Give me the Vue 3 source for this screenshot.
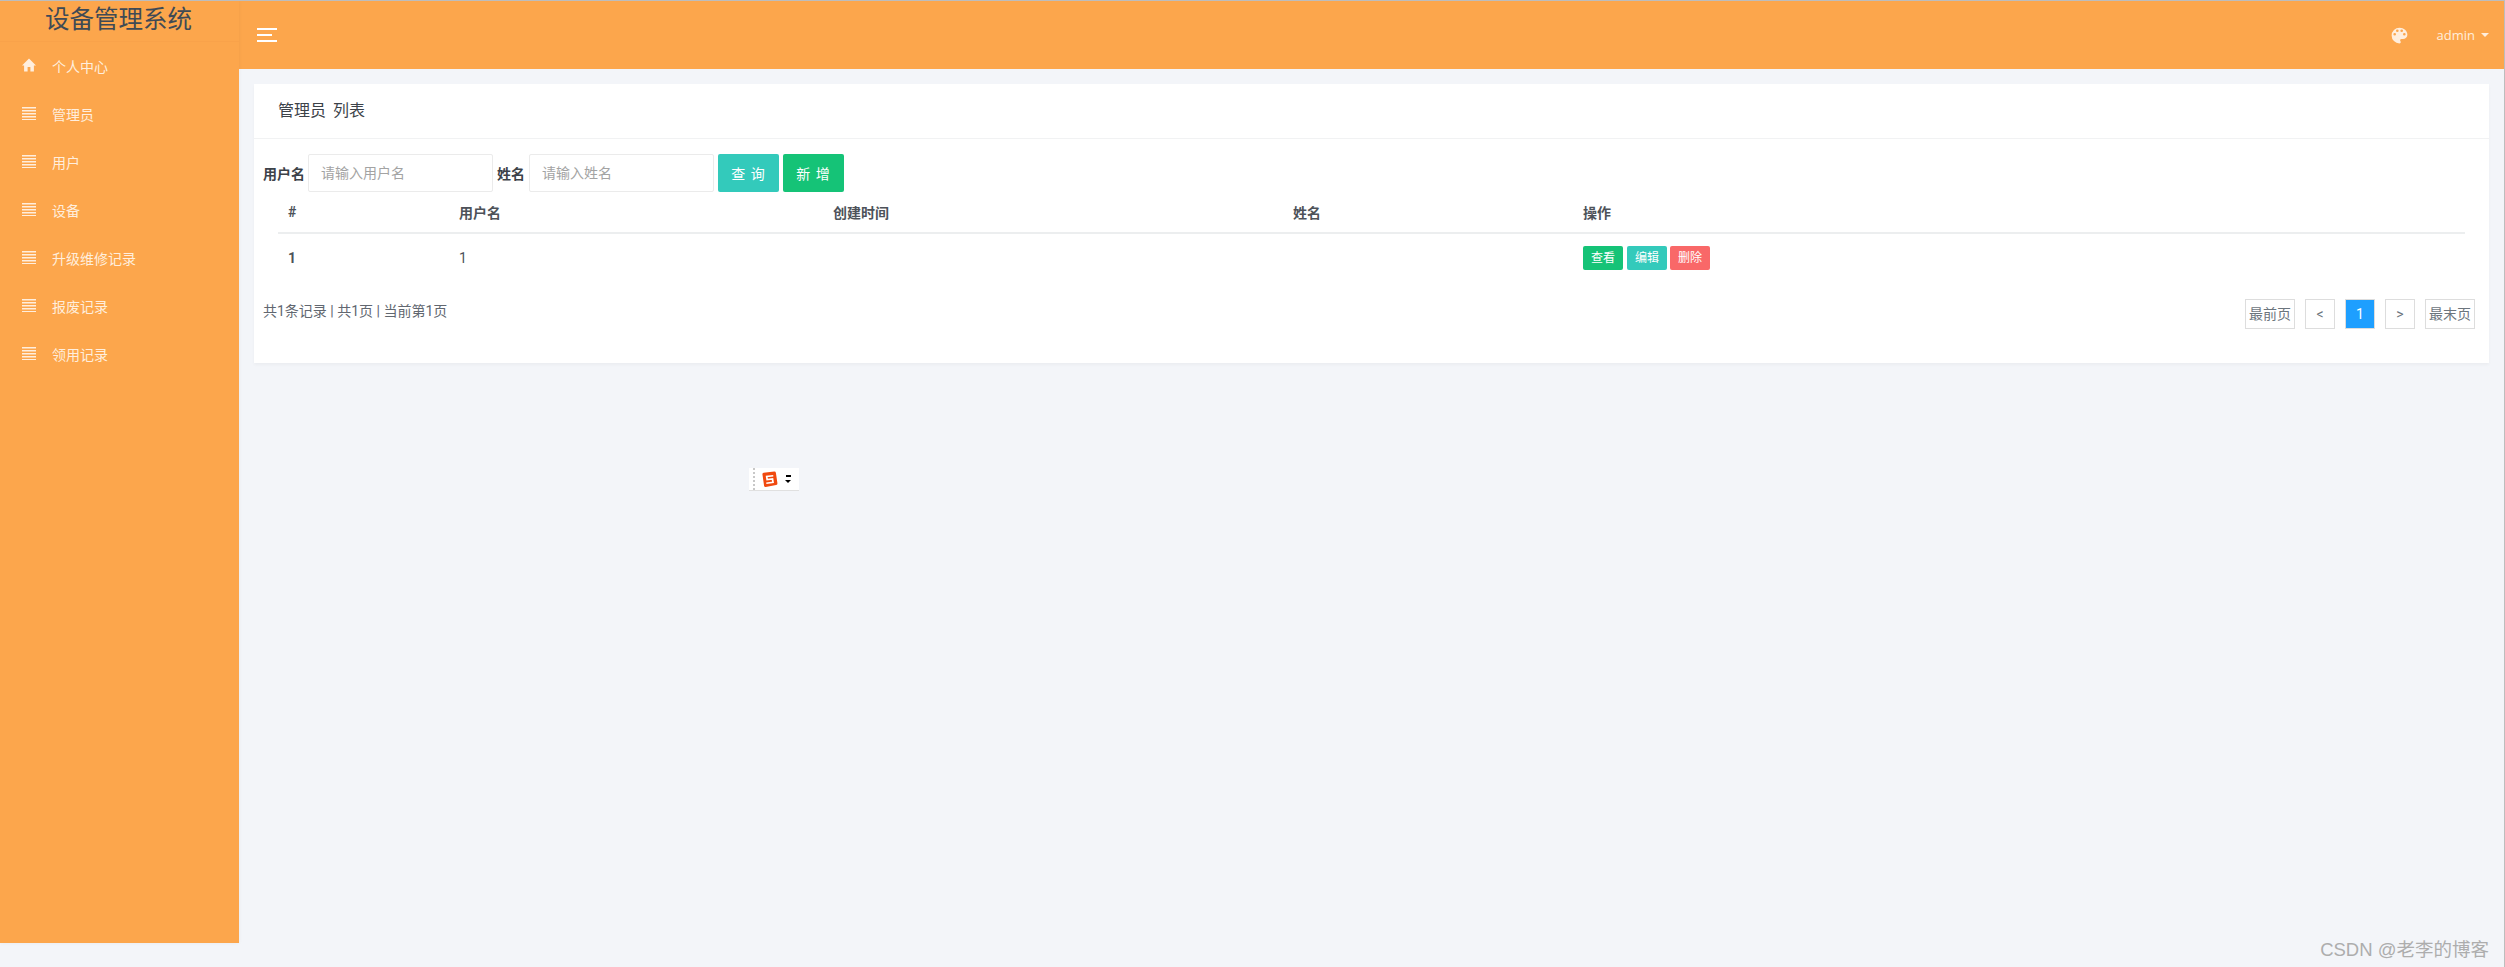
<script setup>
const menus = [
  { name: '个人中心', icon: 'home' },
  { name: '管理员', icon: 'list' },
  { name: '用户', icon: 'list' },
  { name: '设备', icon: 'list' },
  { name: '升级维修记录', icon: 'list' },
  { name: '报废记录', icon: 'list' },
  { name: '领用记录', icon: 'list' },
]

const homePath = 'M10 20v-6h4v6h5v-8h3L12 3 2 12h3v8h5z'
const listPath = 'M0 1h14v1.4H0zM0 4h14v1.4H0zM0 7h14v1.4H0zM0 10h14v1.4H0zM0 13h14v1H0z'
const palettePath = 'M17.5,12A1.5,1.5 0 0,1 16,10.5A1.5,1.5 0 0,1 17.5,9A1.5,1.5 0 0,1 19,10.5A1.5,1.5 0 0,1 17.5,12M14.5,8A1.5,1.5 0 0,1 13,6.5A1.5,1.5 0 0,1 14.5,5A1.5,1.5 0 0,1 16,6.5A1.5,1.5 0 0,1 14.5,8M9.5,8A1.5,1.5 0 0,1 8,6.5A1.5,1.5 0 0,1 9.5,5A1.5,1.5 0 0,1 11,6.5A1.5,1.5 0 0,1 9.5,8M6.5,12A1.5,1.5 0 0,1 5,10.5A1.5,1.5 0 0,1 6.5,9A1.5,1.5 0 0,1 8,10.5A1.5,1.5 0 0,1 6.5,12M12,3A9,9 0 0,0 3,12A9,9 0 0,0 12,21A1.5,1.5 0 0,0 13.5,19.5C13.5,19.11 13.35,18.76 13.11,18.5C12.88,18.23 12.73,17.88 12.73,17.5A1.5,1.5 0 0,1 14.23,16H16A5,5 0 0,0 21,11C21,6.58 16.97,3 12,3Z'

const pages = [
  { label: '最前页', wide: true },
  { label: '<' },
  { label: '1', active: true },
  { label: '>' },
  { label: '最末页', wide: true },
]
</script>

<template>
  <div class="layout">
    <aside class="sidebar">
      <div class="brand">设备管理系统</div>
      <ul class="menu">
        <li v-for="m in menus" :key="m.name" class="menu-item">
          <svg v-if="m.icon === 'home'" class="menu-icon" viewBox="2 2.5 20 18" preserveAspectRatio="none">
            <path :d="homePath" fill="currentColor" />
          </svg>
          <svg v-else class="menu-icon" viewBox="0 0 14 14">
            <path :d="listPath" fill="currentColor" />
          </svg>
          <span>{{ m.name }}</span>
        </li>
      </ul>
    </aside>

    <div class="main">
      <header class="topbar">
        <div class="burger"><i></i><i class="short"></i><i></i></div>
        <div class="top-right">
          <svg class="palette" viewBox="0 0 24 24"><path :d="palettePath" fill="currentColor" /></svg>
          <span class="user">admin</span>
          <span class="caret"></span>
        </div>
      </header>

      <div class="content">
        <div class="card">
          <div class="card-head">管理员 列表</div>
          <div class="card-body">
            <div class="filters">
              <label>用户名</label>
              <input type="text" placeholder="请输入用户名">
              <label class="second">姓名</label>
              <input type="text" placeholder="请输入姓名">
              <button class="btn teal">查 询</button>
              <button class="btn green">新 增</button>
            </div>

            <table class="list">
              <colgroup>
                <col style="width: 171px">
                <col style="width: 374px">
                <col style="width: 460px">
                <col style="width: 290px">
                <col>
              </colgroup>
              <thead>
                <tr>
                  <th>#</th>
                  <th>用户名</th>
                  <th>创建时间</th>
                  <th>姓名</th>
                  <th>操作</th>
                </tr>
              </thead>
              <tbody>
                <tr>
                  <td class="num">1</td>
                  <td>1</td>
                  <td></td>
                  <td></td>
                  <td>
                    <div class="actions">
                      <a class="mini green">查看</a>
                      <a class="mini teal">编辑</a>
                      <a class="mini red">删除</a>
                    </div>
                  </td>
                </tr>
              </tbody>
            </table>

            <div class="foot">
              <span class="summary">共1条记录 | 共1页 | 当前第1页</span>
              <div class="pager">
                <a
                  v-for="p in pages"
                  :key="p.label"
                  class="page"
                  :class="{ wide: p.wide, active: p.active }"
                >{{ p.label }}</a>
              </div>
            </div>
          </div>
        </div>
      </div>
    </div>

    <div class="ime">
      <span class="ime-grip"></span>
      <svg class="ime-logo" viewBox="0 0 18 18">
        <path d="M1.5 3.5 Q1.3 2 2.8 1.8 L14 0.6 Q15.6 0.5 15.8 2 L17.4 13 Q17.6 14.6 16 14.9 L5 17 Q3.6 17.2 3.3 15.8 Z" fill="#f0490f" />
        <path d="M13 5 L6 5.7 L6.5 9 L12.2 8.5 L12.7 12 L5.6 13" fill="none" stroke="#fff" stroke-width="1.8" />
      </svg>
      <span class="ime-arrows"><i></i><b></b></span>
    </div>

    <div class="watermark">CSDN @老李的博客</div>
  </div>
</template>

<style>
html, body {
  margin: 0;
  padding: 0;
  background: #f3f5f9;
  overflow: hidden;
}
</style>

<style scoped>
.layout {
  position: relative;
  display: flex;
  align-items: flex-start;
  box-sizing: border-box;
  width: 2505px;
  height: 967px;
  overflow: hidden;
  border-top: 1px solid #bdbdbd;
  border-right: 1px solid #bdbdbd;
  background: #f3f5f9;
  color: #4d5259;
  font-family: Roboto, "Noto Sans CJK SC", sans-serif;
  font-size: 14px;
}

.sidebar {
  flex: none;
  width: 239px;
  height: 942px;
  background: #fca64c;
  box-shadow: 0 0 4px rgba(0, 0, 0, 0.05);
  z-index: 1;
}

.brand {
  height: 40px;
  line-height: 38px;
  padding-left: 45px;
  border-bottom: 1px solid #f9a24a;
  color: #3f4a55;
  font-size: 24.5px;
  white-space: nowrap;
}

.menu {
  list-style: none;
  margin: 0;
  padding: 0;
}

.menu-item {
  display: flex;
  align-items: center;
  height: 48px;
  padding-left: 22px;
  color: #ffeedd;
}

.menu-icon {
  flex: none;
  width: 14px;
  height: 14px;
  margin: -2px 16px 0 0;
}

.main {
  flex: 1;
  min-width: 0;
}

.topbar {
  display: flex;
  align-items: center;
  justify-content: space-between;
  height: 68px;
  padding: 0 15px 0 18px;
  background: #fca64c;
  color: #ffeedd;
}

.burger {
  display: flex;
  flex-direction: column;
  gap: 4px;
  width: 20px;
  margin-top: -1px;
}

.burger i {
  display: block;
  height: 2px;
  background: #fff;
}

.burger i.short {
  width: 15px;
}

.top-right {
  display: flex;
  align-items: center;
}

.palette {
  width: 21px;
  height: 21px;
  margin-right: 27px;
}

.user {
  font-size: 13px;
  font-family: "Open Sans", sans-serif;
}

.caret {
  margin-left: 6px;
  border-top: 4px solid #ffeedd;
  border-left: 4px solid transparent;
  border-right: 4px solid transparent;
}

.content {
  padding: 15px 15px 0 15px;
}

.card {
  background: #fff;
  box-shadow: 0 2px 3px rgba(0, 0, 0, 0.035);
}

.card-head {
  height: 54px;
  line-height: 54px;
  padding-left: 24px;
  border-bottom: 1px solid #f1f2f3;
  font-size: 16px;
  word-spacing: 3px;
  color: #3c4249;
}

.card-body {
  padding: 15px 14px 34px 9px;
}

.filters {
  display: flex;
  align-items: center;
  height: 38px;
}

.filters label {
  margin-right: 3px;
  font-weight: 700;
  color: #3c4249;
  white-space: nowrap;
}

.filters label.second {
  margin-right: 4px;
}

.filters input {
  box-sizing: border-box;
  width: 185px;
  height: 38px;
  margin-right: 4px;
  padding: 0 12px;
  border: 1px solid #ebebeb;
  border-radius: 2px;
  outline: none;
  font: inherit;
  color: #4d5259;
}

.filters input::placeholder {
  color: #a3a3a3;
}

.btn {
  box-sizing: border-box;
  width: 61px;
  height: 38px;
  margin-right: 4px;
  padding: 0;
  border: none;
  border-radius: 2px;
  color: #fff;
  font: inherit;
  letter-spacing: 1px;
}

.teal {
  background: #33cabb;
}

.green {
  background: #15c377;
}

.red {
  background: #f96868;
}

.list {
  box-sizing: border-box;
  width: 2187px;
  margin-left: 15px;
  border-collapse: collapse;
  table-layout: fixed;
}

.list th {
  height: 40px;
  padding: 0 10px;
  border-bottom: 2px solid #eceeef;
  text-align: left;
  font-weight: 700;
  font-size: 14px;
}

.list td {
  height: 48px;
  padding: 0 10px;
}

.list td.num {
  font-weight: 700;
}

.actions {
  display: flex;
  gap: 3px;
}

.mini {
  display: block;
  width: 40px;
  height: 24px;
  line-height: 24px;
  border-radius: 2px;
  color: #fff;
  font-size: 12px;
  text-align: center;
}

.mini.green {
  margin-right: 1px;
}

.foot {
  display: flex;
  align-items: flex-start;
  justify-content: space-between;
  margin-top: 17px;
}

.summary {
  line-height: 24px;
  color: #616770;
}

.pager {
  display: flex;
  gap: 10px;
}

.page {
  box-sizing: border-box;
  width: 30px;
  height: 30px;
  line-height: 28px;
  border: 1px solid #ddd;
  color: #6c757d;
  text-align: center;
}

.page.wide {
  width: 50px;
  white-space: nowrap;
}

.page.active {
  background: #1e9fff;
  border-color: #ddd;
  color: #fff;
}

.ime {
  position: absolute;
  left: 749px;
  top: 467px;
  display: flex;
  align-items: center;
  box-sizing: border-box;
  width: 50px;
  height: 23px;
  background: #fff;
  border-bottom: 1px solid #e0e0e0;
}

.ime-grip {
  width: 2px;
  height: 22px;
  margin-left: 4px;
  background-image: linear-gradient(#c8c8c8 50%, transparent 50%);
  background-size: 2px 4px;
}

.ime-logo {
  width: 17px;
  height: 17px;
  margin-left: 6px;
}

.ime-arrows {
  display: flex;
  flex-direction: column;
  align-items: center;
  gap: 3px;
  margin-left: 7px;
}

.ime-arrows i {
  width: 5px;
  height: 2px;
  background: #000;
}

.ime-arrows b {
  border-top: 3px solid #000;
  border-left: 3px solid transparent;
  border-right: 3px solid transparent;
}

.watermark {
  position: absolute;
  right: 15px;
  bottom: 6px;
  color: #adadad;
  font-family: "Liberation Sans", "Noto Sans CJK SC", sans-serif;
  font-size: 18.5px;
  white-space: nowrap;
}
</style>
